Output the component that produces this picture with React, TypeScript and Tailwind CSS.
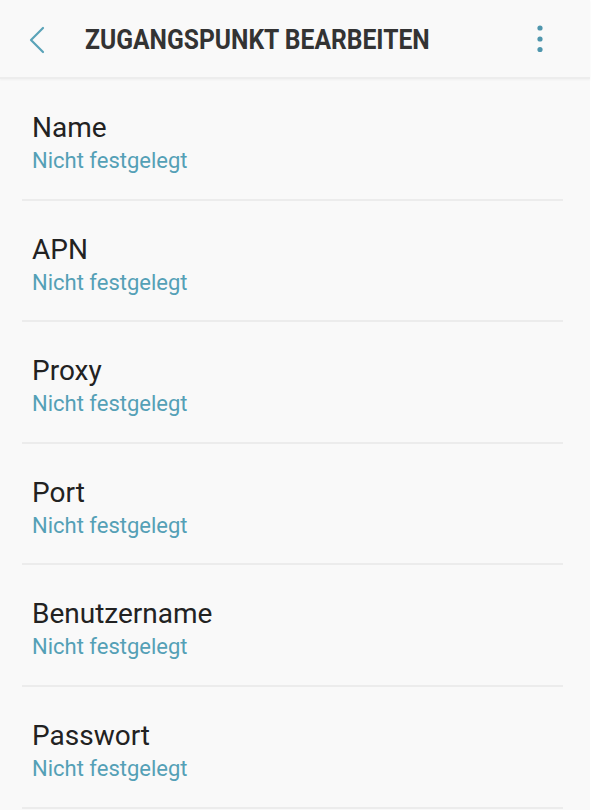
import React from "react";

const items = ["Name", "APN", "Proxy", "Port", "Benutzername", "Passwort"];

function BackChevron() {
  return (
    <svg width="20" height="28" viewBox="0 0 20 28" fill="none">
      <path d="M16 2 L4 14 L16 26" stroke="#5aa3b8" strokeWidth="2.2" strokeLinecap="round" strokeLinejoin="round" />
    </svg>
  );
}

function MoreDots() {
  return (
    <svg width="10" height="30" viewBox="0 0 10 30" fill="#4f96ad">
      <circle cx="5" cy="4" r="2.6" />
      <circle cx="5" cy="15" r="2.6" />
      <circle cx="5" cy="25.5" r="2.6" />
    </svg>
  );
}

function SettingRow({ label }: { label: string }) {
  return (
    <div className="h-[121.6px] flex flex-col">
      <div className="flex-1 pl-[32px] pt-[33px]">
        <div className="text-[28px] leading-[32px] text-[#222222]">{label}</div>
        <div className="mt-[5px] text-[22px] leading-[24px] text-[#54a0b6]">Nicht festgelegt</div>
      </div>
      <div className="ml-[22px] w-[541px] h-[2px] bg-[#ececec]" />
    </div>
  );
}

export default function App() {
  return (
    <div className="flex w-[600px] h-[810px] overflow-hidden bg-white" style={{ fontFamily: "Roboto, 'Noto Sans', sans-serif" }}>
      <div className="w-[590px] bg-[#f9f9f9] flex flex-col">
        <header className="h-[79px] shrink-0 relative flex items-start border-b-2 border-[#ededed] shadow-[0_1px_2px_rgba(0,0,0,0.04)]">
          <div className="pl-[27px] pt-[26px]">
            <BackChevron />
          </div>
          <div className="ml-[38px] pt-[24px] w-[420px]">
            <div className="origin-left scale-x-[0.88] whitespace-nowrap text-[28px] leading-[32px] font-bold text-[#333333]">
              ZUGANGSPUNKT BEARBEITEN
            </div>
          </div>
          <div className="ml-auto mr-[45px] pt-[24px]">
            <MoreDots />
          </div>
        </header>
        <div className="flex flex-col">
          {items.map((it) => (
            <SettingRow key={it} label={it} />
          ))}
        </div>
      </div>
      <div className="flex-1 bg-white" />
    </div>
  );
}
